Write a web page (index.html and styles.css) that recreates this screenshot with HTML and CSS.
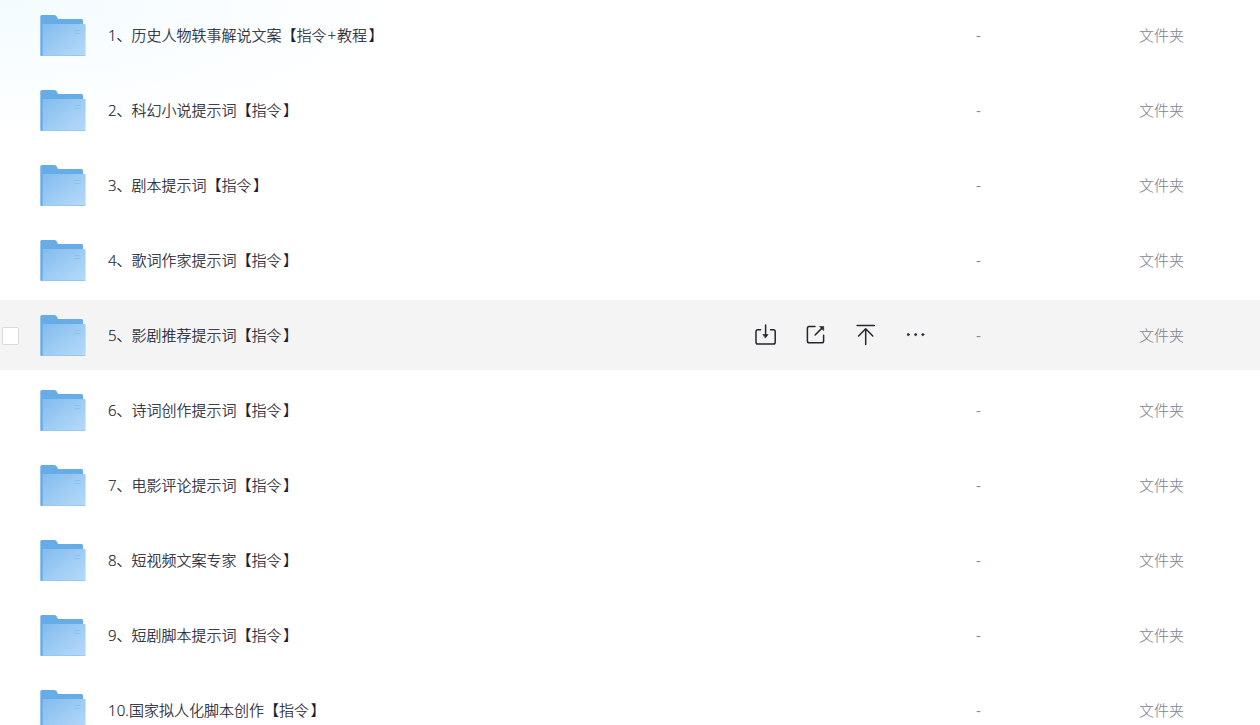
FILE: index.html
```html
<!DOCTYPE html>
<html lang="zh-CN">

<head>
    <meta charset="UTF-8">
    <title>文件列表</title>
    <link rel="stylesheet" href="styles.css">
</head>

<body>
    <svg class="defs" width="0" height="0">
        <defs>
            <linearGradient id="front" x1="0" y1="0" x2="1" y2="1">
                <stop offset="0" stop-color="#82bbee" />
                <stop offset="0.55" stop-color="#a0cdf4" />
                <stop offset="1" stop-color="#b6daf9" />
            </linearGradient>
            <symbol id="folder" viewBox="0 0 46 42">
                <path d="M0.3 1.5Q0.3 0 1.8 0H14.5Q16 0 16.8 1.5L18 4H41.5Q43 4 43 5.5V20H4V41H1.3Q0.3 41 0.3 40Z" fill="#66ade8" />
                <path d="M2.7 9H44.5Q45.6 9 45.6 10V40Q45.6 41 44.6 41H2.7Z" fill="url(#front)" />
                <path d="M2.7 40.5H45.3" stroke="#97c8f2" stroke-width="1" />
                <path d="M34.3 15.5H40.3M34.3 18.5H40.3" stroke="#8cc1ee" stroke-width="1" />
            </symbol>
        </defs>
    </svg>
    <ul class="list">
        <li class="row">
            <span class="check"></span>
            <svg class="folder"><use href="#folder" /></svg>
            <div class="name"><span class="num">1</span>、历史人物轶事解说文案【指令<span class="plus">+</span>教程<span class="end">】</span></div>
            <div class="size">-</div>
            <div class="type">文件夹</div>
        </li>
        <li class="row">
            <span class="check"></span>
            <svg class="folder"><use href="#folder" /></svg>
            <div class="name"><span class="num">2</span>、科幻小说提示词【指令<span class="end">】</span></div>
            <div class="size">-</div>
            <div class="type">文件夹</div>
        </li>
        <li class="row">
            <span class="check"></span>
            <svg class="folder"><use href="#folder" /></svg>
            <div class="name"><span class="num">3</span>、剧本提示词【指令<span class="end">】</span></div>
            <div class="size">-</div>
            <div class="type">文件夹</div>
        </li>
        <li class="row">
            <span class="check"></span>
            <svg class="folder"><use href="#folder" /></svg>
            <div class="name"><span class="num">4</span>、歌词作家提示词【指令<span class="end">】</span></div>
            <div class="size">-</div>
            <div class="type">文件夹</div>
        </li>
        <li class="row active">
            <span class="check"></span>
            <svg class="folder"><use href="#folder" /></svg>
            <div class="name"><span class="num">5</span>、影剧推荐提示词【指令<span class="end">】</span></div>
            <div class="tools">
                <!-- 保存 -->
                <svg class="icon" viewBox="0 0 24 24">
                    <path d="M7.6 6.7H4.8Q3 6.7 3 8.5V19.3Q3 21.1 4.8 21.1H20.4Q22.2 21.1 22.2 19.3V8.5Q22.2 6.7 20.4 6.7H17.6M12.6 2V13" />
                    <path class="fill" d="M10.1 11.5H15.1L12.6 14.8Z" />
                </svg>
                <!-- 分享 -->
                <svg class="icon" viewBox="0 0 24 24">
                    <path d="M12 3.6H6.2Q4.4 3.6 4.4 5.4V17.9Q4.4 19.7 6.2 19.7H18.8Q20.6 19.7 20.6 17.9V12.3M12.1 12L19.2 4.9" />
                    <path class="fill" d="M16.8 3.5H20.7V7.4Z" />
                </svg>
                <!-- 置顶 -->
                <svg class="icon" viewBox="0 0 24 24">
                    <path d="M4.1 2.4H21.3M12.7 21.5V6M5.6 13L12.7 5.8L19.8 13" />
                </svg>
                <!-- 更多 -->
                <svg class="icon" viewBox="0 0 24 24">
                    <circle class="fill" cx="5.3" cy="11.6" r="1.1" />
                    <circle class="fill" cx="12.6" cy="11.6" r="1.1" />
                    <circle class="fill" cx="19.8" cy="11.6" r="1.1" />
                </svg>
            </div>
            <div class="size">-</div>
            <div class="type">文件夹</div>
        </li>
        <li class="row">
            <span class="check"></span>
            <svg class="folder"><use href="#folder" /></svg>
            <div class="name"><span class="num">6</span>、诗词创作提示词【指令<span class="end">】</span></div>
            <div class="size">-</div>
            <div class="type">文件夹</div>
        </li>
        <li class="row">
            <span class="check"></span>
            <svg class="folder"><use href="#folder" /></svg>
            <div class="name"><span class="num">7</span>、电影评论提示词【指令<span class="end">】</span></div>
            <div class="size">-</div>
            <div class="type">文件夹</div>
        </li>
        <li class="row">
            <span class="check"></span>
            <svg class="folder"><use href="#folder" /></svg>
            <div class="name"><span class="num">8</span>、短视频文案专家【指令<span class="end">】</span></div>
            <div class="size">-</div>
            <div class="type">文件夹</div>
        </li>
        <li class="row">
            <span class="check"></span>
            <svg class="folder"><use href="#folder" /></svg>
            <div class="name"><span class="num">9</span>、短剧脚本提示词【指令<span class="end">】</span></div>
            <div class="size">-</div>
            <div class="type">文件夹</div>
        </li>
        <li class="row">
            <span class="check"></span>
            <svg class="folder"><use href="#folder" /></svg>
            <div class="name"><span class="num wide">10.</span>国家拟人化脚本创作【指令<span class="end">】</span></div>
            <div class="size">-</div>
            <div class="type">文件夹</div>
        </li>
    </ul>
</body>

</html>
```
FILE: styles.css
```css
body {
    margin: 0;
    height: 725px;
    overflow: hidden;
    background: radial-gradient(ellipse 420px 140px at 0 0, #f3fbfe, #fff) no-repeat #fff;
    font-family: "Open Sans", "Noto Sans CJK SC", sans-serif;
    font-size: 15px;
    font-weight: 300;
}

.defs {
    position: absolute;
}

.list {
    margin: 0;
    padding: 0;
    list-style: none;
}

.row {
    display: flex;
    align-items: center;
    height: 70px;
    margin-bottom: 5px;
    padding-left: 2px;
    line-height: 22px;
}
.row.active {
    background: #f4f4f4;
}

.check {
    width: 17px;
    height: 18px;
    margin: 2px 21px 0 0;
    box-sizing: border-box;
    border: 1px solid #d9d9d9;
    border-radius: 2px;
    background: #fff;
    visibility: hidden;
}
.active .check {
    visibility: visible;
}

.folder {
    width: 46px;
    height: 42px;
    margin: 2px 22px 0 0;
}

.name {
    flex: 1;
    color: #1c1d30;
    white-space: nowrap;
    -webkit-text-stroke: 0.2px #1c1d30;
}
.num {
    letter-spacing: -0.2px;
}
.num.wide {
    letter-spacing: 0.1px;
}
.plus {
    padding: 0 1px;
}
.end {
    margin-left: 1.5px;
    -webkit-text-stroke: 0;
}

.tools {
    display: flex;
    gap: 26px;
    margin-right: 49px;
}
.icon {
    width: 24px;
    height: 24px;
    fill: none;
    stroke: #25262b;
    stroke-width: 1.5;
    stroke-linecap: round;
    stroke-linejoin: round;
}
.icon .fill {
    fill: #25262b;
    stroke-width: 0.6;
}

.size {
    width: 163px;
    color: #818999;
    font-weight: 400;
}
.type {
    width: 121px;
    color: #818393;
    -webkit-text-stroke: 0.1px #818393;
}
```
